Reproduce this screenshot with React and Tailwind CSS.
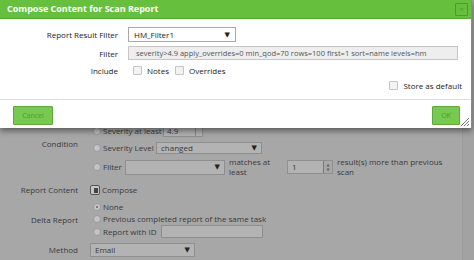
import React from "react";

const Radio = ({ checked }) => (
  <span className="inline-block w-[8px] h-[8px] rounded-full border border-[#9a9a9a] bg-[#c4c4c4] shrink-0 relative">
    {checked && <span className="absolute left-[2px] top-[2px] w-[2px] h-[2px] rounded-full bg-[#666]" />}
  </span>
);

const Check = () => (
  <span className="inline-block w-[9px] h-[9px] border border-[#c4c4c4] bg-[#f3f3f3] rounded-[1px] shrink-0" />
);

const BgSelect = ({ w, children }) => (
  <span className={`flex items-center justify-between border border-[#8f8f8f] bg-[#b3b3b3] px-[4px] shrink-0 ${w}`}>
    <span>{children}</span>
    <span className="text-[7px] text-[#222]">▼</span>
  </span>
);

export default function App() {
  return (
    <div
      className="relative w-[474px] h-[260px] overflow-hidden bg-[#a7a7a7] text-[#3a3a3a]"
      style={{ fontFamily: "'Open Sans', 'DejaVu Sans', sans-serif" }}
    >
      {/* background page (under overlay) */}
      <div className="absolute right-0 top-0 w-[12px] h-[260px] bg-[#a2a2a2] border-l border-[#9c9c9c]" />
      <div className="pt-[125px] text-[8px] leading-[10px]">
        <div className="grid grid-cols-[78px_1fr] gap-x-[12px] items-center">
          <div className="text-right self-start pt-[14px]">Condition</div>
          <div className="flex flex-col">
            <div className="flex items-center h-[12px] pl-[3px]">
              <Radio />
              <span className="w-[60px] ml-[2px] whitespace-nowrap">Severity at least</span>
              <span className="flex items-center border border-[#8f8f8f] bg-[#b3b3b3] w-[40px] h-[12px] shrink-0">
                <span className="flex-1 px-[3px]">4.9</span>
                <span className="w-[7px] h-full border-l border-[#888]" />
              </span>
            </div>
            <div className="flex items-center h-[12px] pl-[3px] mt-[5px]">
              <Radio />
              <span className="w-[53px] ml-[2px] whitespace-nowrap">Severity Level</span>
              <BgSelect w="w-[106px] h-[12px]">changed</BgSelect>
            </div>
            <div className="flex items-center pl-[3px] mt-[3px]">
              <Radio />
              <span className="w-[22px] ml-[2px]">Filter</span>
              <span className="flex items-center justify-end border border-[#8f8f8f] bg-[#b3b3b3] h-[15px] w-[100px] px-[4px] shrink-0">
                <span className="text-[7px] text-[#222]">▼</span>
              </span>
              <span className="w-[54px] leading-[10px] ml-[4px] shrink-0">matches at<br />least</span>
              <span className="flex items-center border border-[#8f8f8f] bg-[#b3b3b3] h-[14px] w-[46px] ml-[4px] shrink-0">
                <span className="flex-1 px-[4px]">1</span>
                <span className="w-[9px] h-full border-l border-[#777] bg-[#a8a8a8] text-[4px] flex flex-col items-center justify-center leading-[5px] text-[#666]">▲<br />▼</span>
              </span>
              <span className="leading-[10px] ml-[4px] whitespace-nowrap">result(s) more than previous<br />scan</span>
            </div>
          </div>

          <div className="text-right mt-[7px]">Report Content</div>
          <div className="flex items-center gap-[2px] h-[12px] mt-[7px]">
            <span className="w-[10px] h-[10px] rounded-[2px] border border-[#555] bg-[#c6c6c6] relative">
              <span className="absolute left-[3px] top-[2px] w-[4px] h-[5px] bg-[#444]" />
            </span>
            <span>Compose</span>
          </div>

          <div className="text-right mt-[5px]">Delta Report</div>
          <div className="flex flex-col gap-[1px] pl-[3px] mt-[5px]">
            <div className="flex items-center h-[11px]"><Radio checked /><span className="ml-[2px]">None</span></div>
            <div className="flex items-center h-[11px]"><Radio /><span className="ml-[2px] whitespace-nowrap">Previous completed report of the same task</span></div>
            <div className="flex items-center h-[13px]"><Radio /><span className="ml-[2px] w-[58px] whitespace-nowrap">Report with ID</span><span className="border border-[#8f8f8f] bg-[#b3b3b3] h-[13px] w-[102px]" /></div>
          </div>

          <div className="text-right mt-[5px]">Method</div>
          <div className="mt-[5px]"><BgSelect w="w-[105px] h-[14px]">Email</BgSelect></div>

          <div />
          <div className="border border-[#8f8f8f] bg-[#b3b3b3] h-[14px] w-[357px] mt-[3px]" />
        </div>
      </div>

      {/* dialog */}
      <div className="absolute left-0 top-0 w-[472px] h-[128px] bg-white flex flex-col shadow-[0_3px_6px_rgba(0,0,0,0.45)] border-r border-[#8a8a8a]">
        <div className="h-[19px] shrink-0 bg-[#66bf3d] border-b border-[#58a834] flex items-center justify-between pl-[7px] pr-[3px]">
          <span className="text-white font-bold text-[9px]">Compose Content for Scan Report</span>
          <span className="w-[13px] h-[13px] border border-[#4f9a2d] rounded-[1px] flex items-center justify-center text-[#4f9a2d] text-[8px] leading-none">×</span>
        </div>
        <div className="flex-1 flex flex-col text-[8px] leading-[11px] text-[#222] pt-[8px]">
          <div className="grid grid-cols-[118px_1fr] gap-x-[10px] gap-y-[4px] items-center">
            <div className="text-right">Report Result Filter</div>
            <div className="flex items-center justify-between border border-[#a9a9a9] h-[15px] w-[108px] px-[5px]">
              <span>HM_Filter1</span>
              <span className="text-[7px]">▼</span>
            </div>
            <div className="text-right">Filter</div>
            <div className="border border-[#c6c6c6] bg-[#eeeeee] h-[14px] w-[330px] px-[7px] flex items-center text-[#555] text-[7.5px] whitespace-nowrap">
              severity&gt;4.9 apply_overrides=0 min_qod=70 rows=100 first=1 sort=name levels=hm
            </div>
            <div className="text-right">Include</div>
            <div className="flex items-center h-[12px] pl-[5px]">
              <Check /><span className="ml-[5px]">Notes</span>
              <span className="ml-[6px] flex"><Check /></span><span className="ml-[5px]">Overrides</span>
            </div>
          </div>
          <div className="flex items-center justify-end gap-[5px] pr-[9px] mt-[4px]">
            <Check /><span>Store as default</span>
          </div>
          <div className="mt-[8px] border-t border-[#dedede] flex items-center justify-between pl-[13px] pr-[11px] pt-[6px]">
            <span className="w-[40px] h-[19px] bg-[#78c94f] border border-[#5ea73c] rounded-[1px] flex items-center justify-center text-[7px] text-[#4f9a34]">Cancel</span>
            <span className="w-[28px] h-[19px] bg-[#78c94f] border border-[#5ea73c] rounded-[1px] flex items-center justify-center text-[7px] text-[#4f9a34]">OK</span>
          </div>
        </div>
        <svg className="absolute right-[1px] bottom-[1px]" width="10" height="10" viewBox="0 0 10 10">
          <path d="M9 1 L1 9 M9 4 L4 9 M9 7 L7 9" stroke="#777" strokeWidth="1" />
        </svg>
      </div>
    </div>
  );
}
